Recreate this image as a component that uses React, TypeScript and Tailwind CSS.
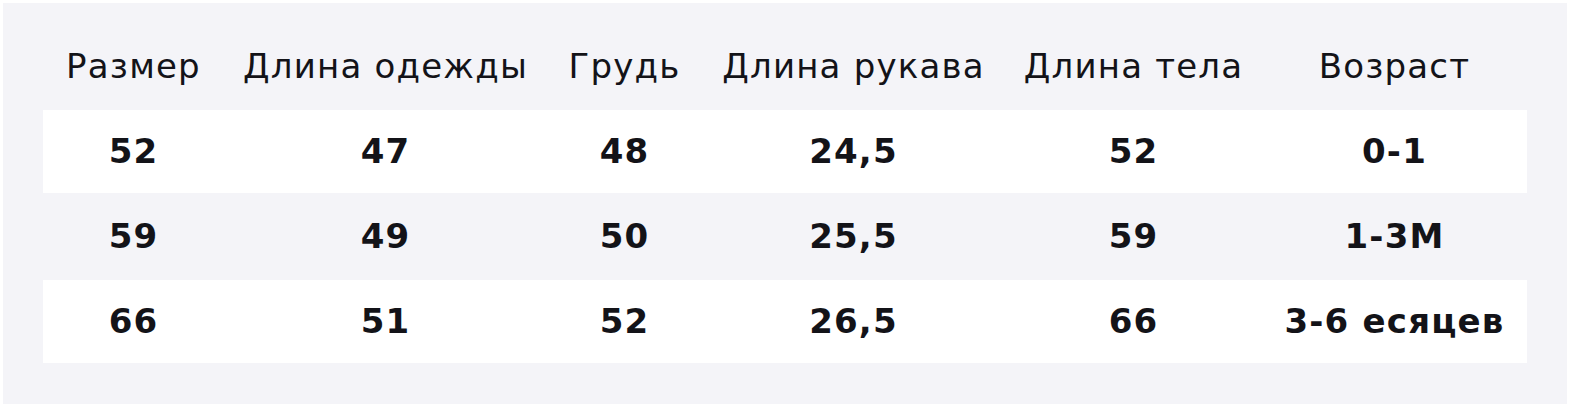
import React from 'react';

const headers = ['Размер', 'Длина одежды', 'Грудь', 'Длина рукава', 'Длина тела', 'Возраст'];

const rows = [
  { cells: ['52', '47', '48', '24,5', '52', '0-1'], white: true, height: 'h-[83px]' },
  { cells: ['59', '49', '50', '25,5', '59', '1-3M'], white: false, height: 'h-[87px]' },
  { cells: ['66', '51', '52', '26,5', '66', '3-6 есяцев'], white: true, height: 'h-[83px]' },
];

const cols = 'grid grid-cols-[178px_326px_152px_306px_254px_1fr]';

export default function App() {
  return (
    <div className="bg-white p-[3px] w-[1570px] h-[408px]" style={{ fontFamily: '"DejaVu Sans", sans-serif' }}>
      <div className="bg-[#f4f4f8] px-10 pb-[41px] h-[401px] text-[#131318]">
        <div className={`${cols} h-[107px] pt-5 items-center text-[34px] tracking-[1.2px]`}>
          {headers.map((h) => (
            <div key={h} className="text-center whitespace-nowrap pl-[3px]">{h}</div>
          ))}
        </div>
        {rows.map((r, i) => (
          <div key={i} className={`${cols} ${r.height} items-center text-[34px] tracking-[1.2px] font-bold ${r.white ? 'bg-white' : ''}`}>
            {r.cells.map((c, j) => (
              <div key={j} className="text-center whitespace-nowrap pl-[3px]">{c}</div>
            ))}
          </div>
        ))}
      </div>
    </div>
  );
}
